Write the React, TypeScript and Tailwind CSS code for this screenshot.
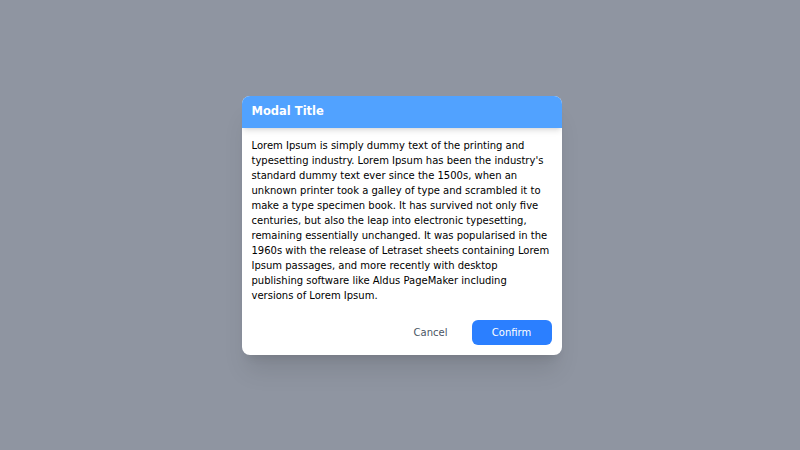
import React from 'react'

const body =
  "Lorem Ipsum is simply dummy text of the printing and typesetting industry. Lorem Ipsum has been the industry's standard dummy text ever since the 1500s, when an unknown printer took a galley of type and scrambled it to make a type specimen book. It has survived not only five centuries, but also the leap into electronic typesetting, remaining essentially unchanged. It was popularised in the 1960s with the release of Letraset sheets containing Lorem Ipsum passages, and more recently with desktop publishing software like Aldus PageMaker including versions of Lorem Ipsum."

const Modal = ({ title, children }: { title: string; children: React.ReactNode }) => {
  return (
    <div className='w-80 bg-white rounded-lg shadow-xl overflow-hidden'>
      <div className='bg-blue-400 h-8 px-2.5 flex items-center shadow-md relative'>
        <h2 className='text-white font-bold text-[11.5px]'>{title}</h2>
      </div>
      <div className='px-2.5 pt-2.5 pb-2.5'>
        <p className='text-[10px] leading-[15px] text-black'>{children}</p>
        <div className='flex flex-row items-center justify-end gap-2 mt-[17px]'>
          <button className='text-[10px] text-gray-600 px-4 h-[25px] rounded-md'>Cancel</button>
          <button className='text-[10px] text-white bg-blue-500 w-20 h-[25px] rounded-md'>Confirm</button>
        </div>
      </div>
    </div>
  )
}

export default function App() {
  return (
    <div className='w-[800px] h-[450px] bg-gray-500/75 flex items-center justify-center pl-[3px]' style={{ fontFamily: '"DejaVu Sans", sans-serif' }}>
      <Modal title='Modal Title'>{body}</Modal>
    </div>
  )
}
